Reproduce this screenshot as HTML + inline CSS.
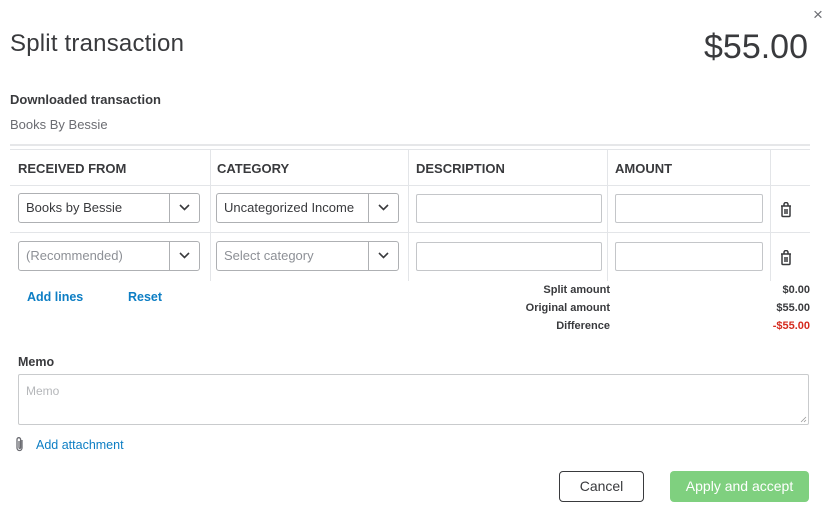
<!DOCTYPE html>
<html><head><style>
*{box-sizing:border-box;margin:0;padding:0}
body{width:830px;height:508px;background:#fff;font-family:"Liberation Sans",sans-serif;color:#393a3d;position:relative;overflow:hidden}
.a{position:absolute;white-space:nowrap}
.box{position:absolute;border:1px solid #c4c6c9;border-radius:2px;background:#fff}
.sel{position:absolute;border:1px solid #aeb0b3;border-radius:3px;height:30px;font-size:13px;line-height:28px;padding-left:7px;color:#393a3d}
.sel .dv{position:absolute;right:0;top:0;width:30px;height:28px;border-left:1px solid #aeb0b3}
.sel svg{position:absolute;right:9px;top:10px}
.th{font-size:13px;font-weight:bold;color:#393a3d}
.vl{position:absolute;width:1px;background:#e3e5e8}
.hl{position:absolute;height:1px;background:#e3e5e8;left:10px;width:800px}
.lnk{color:#0d7ec4;font-weight:bold;font-size:12.5px}
.sm{font-size:11px;font-weight:bold;text-align:right;color:#393a3d}
</style></head><body>
<div class="a" style="left:813px;top:5px;font-size:17px;color:#6b6c72">×</div>
<div class="a" style="left:10px;top:30px;font-size:24px;color:#393a3d;letter-spacing:0.2px">Split transaction</div>
<div class="a" style="right:22px;top:28px;font-size:34px;color:#393a3d">$55.00</div>
<div class="a" style="left:10px;top:92px;font-size:13px;font-weight:bold">Downloaded transaction</div>
<div class="a" style="left:10px;top:117px;font-size:13px;color:#6b6c72">Books By Bessie</div>
<div class="hl" style="top:144px;height:2px;background:#e6e7e9"></div>
<div class="hl" style="top:149px"></div>
<div class="hl" style="top:185px"></div>
<div class="hl" style="top:232px"></div>
<div class="vl" style="left:210px;top:149px;height:132px"></div>
<div class="vl" style="left:408px;top:149px;height:132px"></div>
<div class="vl" style="left:607px;top:149px;height:132px"></div>
<div class="vl" style="left:770px;top:149px;height:132px"></div>
<div class="a th" style="left:18px;top:161px">RECEIVED FROM</div>
<div class="a th" style="left:217px;top:161px">CATEGORY</div>
<div class="a th" style="left:416px;top:161px">DESCRIPTION</div>
<div class="a th" style="left:615px;top:161px">AMOUNT</div>

<div class="sel" style="left:18px;top:193px;width:182px">Books by Bessie<div class="dv"></div><svg width="11" height="7" viewBox="0 0 11 7"><path d="M1 1l4.5 4.5L10 1" fill="none" stroke="#393a3d" stroke-width="1.6"/></svg></div>
<div class="sel" style="left:216px;top:193px;width:183px">Uncategorized Income<div class="dv"></div><svg width="11" height="7" viewBox="0 0 11 7"><path d="M1 1l4.5 4.5L10 1" fill="none" stroke="#393a3d" stroke-width="1.6"/></svg></div>
<div class="sel" style="left:18px;top:241px;width:182px;color:#8d9096">(Recommended)<div class="dv"></div><svg width="11" height="7" viewBox="0 0 11 7"><path d="M1 1l4.5 4.5L10 1" fill="none" stroke="#393a3d" stroke-width="1.6"/></svg></div>
<div class="sel" style="left:216px;top:241px;width:183px;color:#8d9096">Select category<div class="dv"></div><svg width="11" height="7" viewBox="0 0 11 7"><path d="M1 1l4.5 4.5L10 1" fill="none" stroke="#393a3d" stroke-width="1.6"/></svg></div>
<div class="box" style="left:416px;top:194px;width:186px;height:29px"></div>
<div class="box" style="left:615px;top:194px;width:148px;height:29px"></div>
<div class="box" style="left:416px;top:242px;width:186px;height:29px"></div>
<div class="box" style="left:615px;top:242px;width:148px;height:29px"></div>
<svg class="a" style="left:779px;top:202px" width="14" height="16" viewBox="0 0 14 16"><path d="M2 4h10M5 4V2.5a1.5 1.5 0 0 1 4 0V4M3 4v9.5a1 1 0 0 0 1 1h6a1 1 0 0 0 1-1V4M6 7v5M8 7v5" fill="none" stroke="#393a3d" stroke-width="1.5"/></svg>
<svg class="a" style="left:779px;top:250px" width="14" height="16" viewBox="0 0 14 16"><path d="M2 4h10M5 4V2.5a1.5 1.5 0 0 1 4 0V4M3 4v9.5a1 1 0 0 0 1 1h6a1 1 0 0 0 1-1V4M6 7v5M8 7v5" fill="none" stroke="#393a3d" stroke-width="1.5"/></svg>

<div class="a lnk" style="left:27px;top:290px">Add lines</div>
<div class="a lnk" style="left:128px;top:290px">Reset</div>
<div class="a sm" style="right:220px;top:284px">Split amount</div>
<div class="a sm" style="right:220px;top:302px">Original amount</div>
<div class="a sm" style="right:220px;top:320px">Difference</div>
<div class="a sm" style="right:20px;top:284px">$0.00</div>
<div class="a sm" style="right:20px;top:302px">$55.00</div>
<div class="a sm" style="right:20px;top:320px;color:#d52b1e">-$55.00</div>

<div class="a" style="left:18px;top:355px;font-size:12.5px;font-weight:bold">Memo</div>
<div class="box" style="left:18px;top:374px;width:791px;height:51px;border-color:#c9cbcd"><div style="position:absolute;left:7px;top:9px;font-size:12px;color:#b5b7ba">Memo</div>
<svg style="position:absolute;right:1px;bottom:1px" width="7" height="7"><path d="M6 1L1 6M6 4L4 6" stroke="#999" stroke-width="0.8"/></svg></div>
<svg class="a" style="left:15px;top:436px" width="10" height="16" viewBox="0 0 10 16"><path d="M7 4v8a2.5 2.5 0 0 1-5 0V3.5a1.8 1.8 0 0 1 3.6 0V11.5a.8.8 0 0 1-1.6 0V5" fill="none" stroke="#6b6c72" stroke-width="1.3"/></svg>
<div class="a lnk" style="left:36px;top:438px;font-weight:normal;font-size:12.5px">Add attachment</div>
<div class="a" style="left:559px;top:471px;width:85px;height:31px;border:1.5px solid #393a3d;border-radius:4px;font-size:14px;text-align:center;line-height:28px">Cancel</div>
<div class="a" style="left:670px;top:471px;width:139px;height:31px;background:#7fd07f;border-radius:4px;font-size:14px;color:#fff;text-align:center;line-height:31px">Apply and accept</div>
</body></html>
